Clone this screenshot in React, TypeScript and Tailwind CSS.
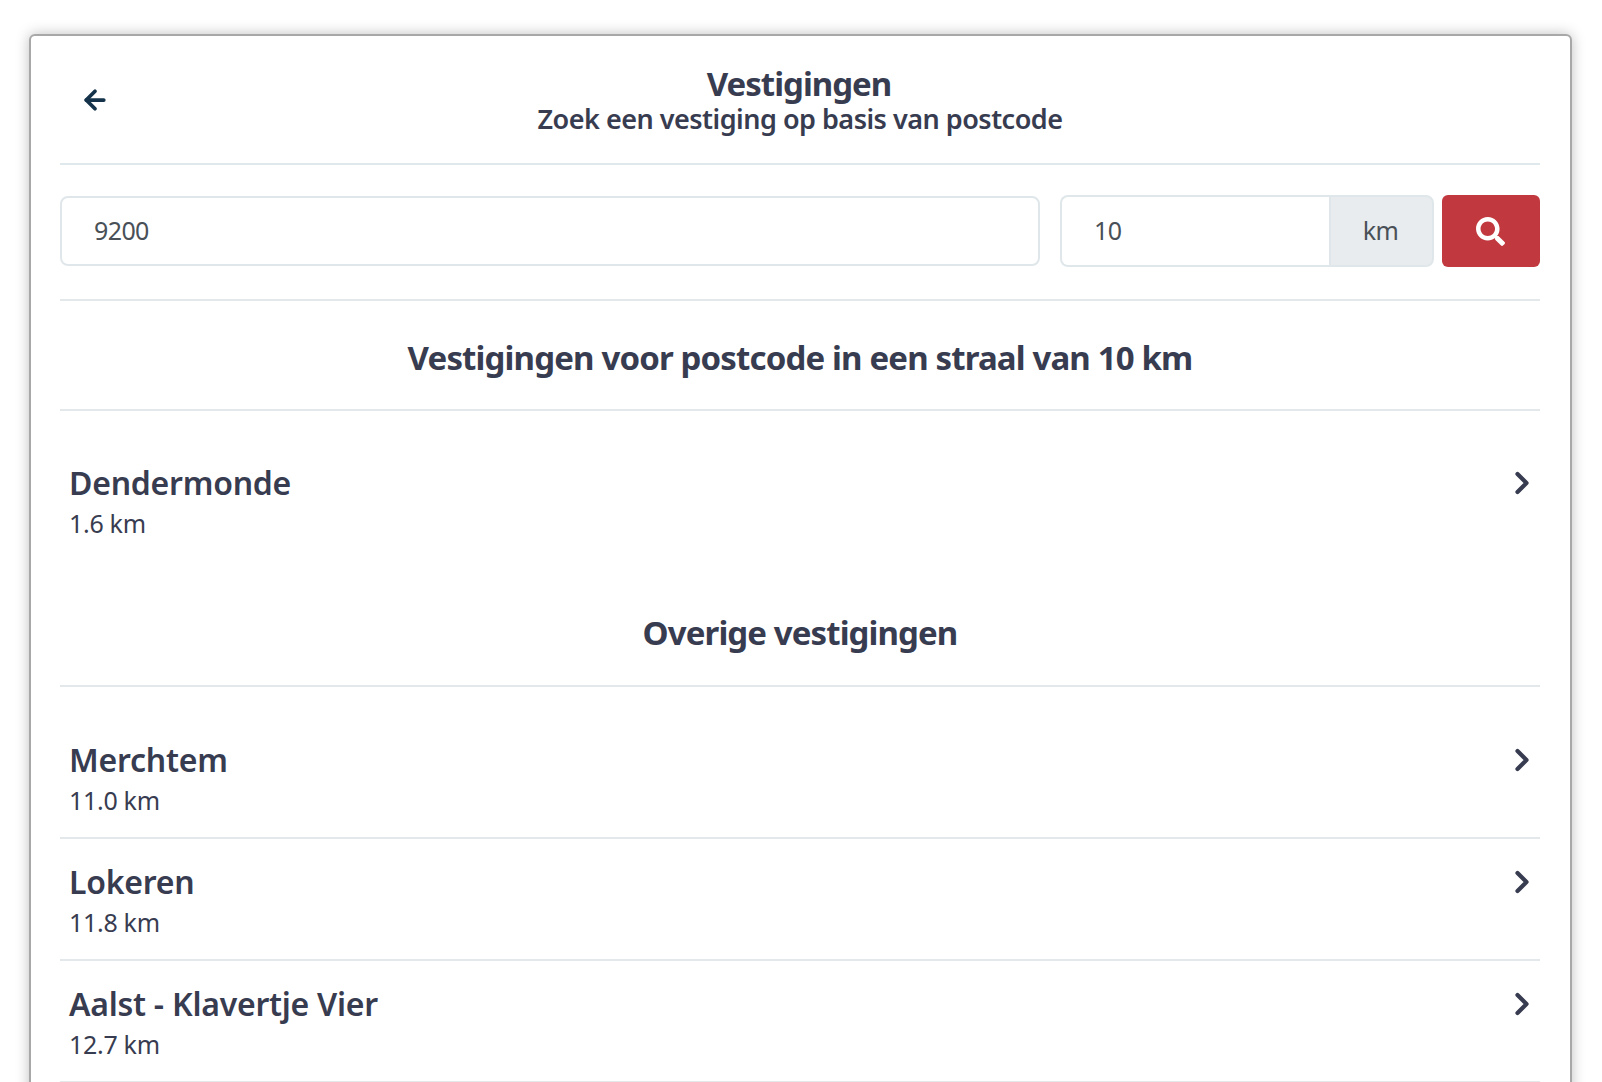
import { ArrowLeft, ChevronRight } from 'lucide-react'
import { FaSearch } from 'react-icons/fa'

const font = { fontFamily: '"Noto Sans", sans-serif' }

const Row = ({ name, km, last }: { name: string; km: string; last?: boolean }) => (
  <div className={`flex h-[122px] items-start justify-between pl-[9px] ${last ? '' : 'border-b-2 border-[#e3e8ea]'}`}>
    <div className="pt-[22px]">
      <div className="text-[32px] leading-[42px] font-semibold tracking-[-0.25px] text-[#383c50]">{name}</div>
      <div className="text-[25px] leading-[39px] tracking-[-0.3px] text-[#383c50]">{km}</div>
    </div>
    <ChevronRight className="mt-[25px] text-[#383c50]" size={36} strokeWidth={2.8} />
  </div>
)

export default function App() {
  return (
    <div className="h-[1082px] overflow-hidden bg-white pl-[29px] pr-[30px] pt-[34px]" style={font}>
      <div className="h-[1100px] rounded-t-[6px] border-2 border-[#a8a8a8] bg-white pl-[29px] pr-[30px] shadow-[0_0_14px_rgba(0,0,0,0.25)]">
        <div className="relative flex h-[129px] flex-col items-center justify-end border-b-2 border-[#dfe8ec] pb-[27px] text-[#383c50]">
          <ArrowLeft className="absolute left-[20px] top-[49px] text-[#14334a]" size={30} strokeWidth={3} />
          <div className="pr-[2px] text-[33px] leading-[36px] font-bold tracking-[-1px]">Vestigingen</div>
          <div className="text-[27px] leading-[34px] font-semibold tracking-[-0.5px]">Zoek een vestiging op basis van postcode</div>
        </div>
        <div className="flex h-[136px] items-center border-b-2 border-[#e3e8ea] pb-[2px]">
          <div className="flex h-[70px] w-[980px] items-center rounded-[8px] border-2 border-[#e0e7ea] pl-[32px] text-[25px] tracking-[-0.6px] text-[#495057]">9200</div>
          <div className="ml-[20px] flex h-[72px] w-[374px]">
            <div className="flex flex-1 items-center rounded-l-[8px] border-2 border-r-0 border-[#e0e7ea] pl-[32px] text-[25px] tracking-[-0.6px] text-[#495057]">10</div>
            <div className="flex w-[105px] items-center justify-center rounded-r-[8px] border-2 border-[#e0e7ea] bg-[#e9ecef] pr-[2px] text-[25px] tracking-[-0.6px] text-[#495057]">km</div>
          </div>
          <button className="ml-[8px] flex h-[72px] w-[98px] items-center justify-center rounded-[6px] bg-[#c1393f] pr-[2px] text-white">
            <FaSearch size={29} />
          </button>
        </div>
        <div className="flex h-[110px] items-center justify-center border-b-2 border-[#e3e8ea] pt-[6px] text-[33px] font-bold tracking-[-0.85px] text-[#383c50]">
          Vestigingen voor postcode in een straal van 10 km
        </div>
        <div className="pt-[29px]">
          <Row name="Dendermonde" km="1.6 km" last />
        </div>
        <div className="flex h-[125px] items-end justify-center border-b-2 border-[#e3e8ea] pb-[28px] text-[33px] font-bold tracking-[-0.9px] text-[#383c50]">
          Overige vestigingen
        </div>
        <div className="pt-[30px]">
          <Row name="Merchtem" km="11.0 km" />
        </div>
        <Row name="Lokeren" km="11.8 km" />
        <Row name="Aalst - Klavertje Vier" km="12.7 km" />
      </div>
    </div>
  )
}
